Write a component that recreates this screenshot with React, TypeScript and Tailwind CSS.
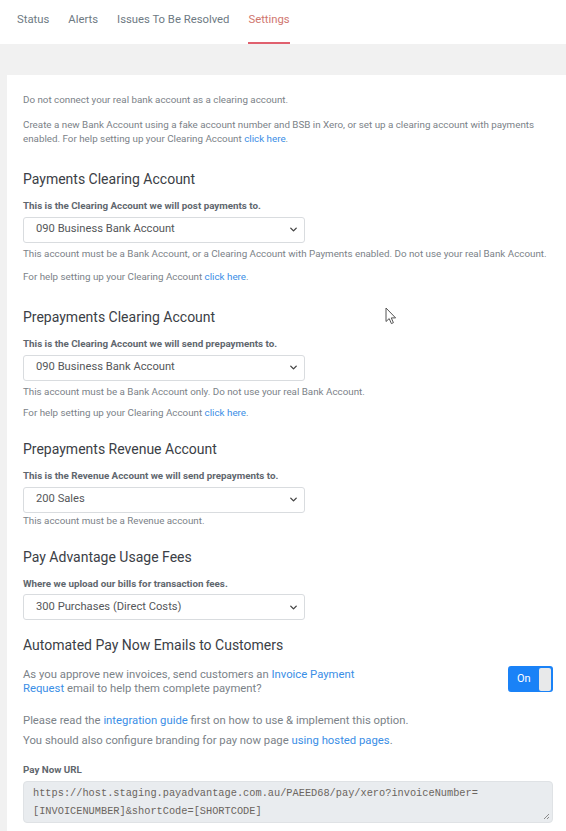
import { ChevronDown } from "lucide-react";

const tabs = ["Status", "Alerts", "Issues To Be Resolved", "Settings"];

function Select({ value, className = "" }: { value: string; className?: string }) {
  return (
    <div
      className={`flex h-[26px] w-[282px] items-center justify-between rounded-[3px] border border-[#d9dcdf] bg-white pl-[12px] pr-[5px] text-[11.2px] text-[#55575a] ${className}`}
    >
      <span>{value}</span>
      <ChevronDown size={11} strokeWidth={3} className="text-[#444]" />
    </div>
  );
}

function Heading({ children, className = "" }: { children: React.ReactNode; className?: string }) {
  return <h2 className={`text-[14px] leading-[20px] text-[#3b4046] ${className}`}>{children}</h2>;
}

function Label({ children, className = "" }: { children: React.ReactNode; className?: string }) {
  return (
    <div className={`text-[9.8px] font-bold leading-[13px] text-[#5f676e] ${className}`}>{children}</div>
  );
}

function Small({ children, className = "" }: { children: React.ReactNode; className?: string }) {
  return <p className={`text-[9.8px] leading-[14.5px] text-[#7b8288] ${className}`}>{children}</p>;
}

function Link({ children }: { children: React.ReactNode }) {
  return <a className="text-[#3a8ee6]">{children}</a>;
}

export default function App() {
  return (
    <div className="relative min-h-[831px] bg-[#f1f1f1] font-['Roboto',sans-serif]">
      <header className="flex h-[44px] gap-[19px] bg-white pl-[17px]">
        {tabs.map((t) => (
          <div
            key={t}
            className={`flex h-[44px] items-center border-b-2 pb-[2px] text-[11.3px] ${
              t === "Settings" ? "border-[#e0606e] text-[#d0766e]" : "border-transparent text-[#6e7a83]"
            }`}
          >
            {t}
          </div>
        ))}
      </header>

      <main className="pl-[7px] pt-[31px]">
        <section className="min-h-[756px] bg-white pl-[16px] pr-[13px] pt-[18px]">
          <Small>Do not connect your real bank account as a clearing account.</Small>
          <Small className="mt-[10px] pr-[8px]">
            Create a new Bank Account using a fake account number and BSB in Xero, or set up a clearing
            account with payments enabled. For help setting up your Clearing Account <Link>click here</Link>.
          </Small>

          <Heading className="mt-[22px]">Payments Clearing Account</Heading>
          <Label className="mt-[10px]">This is the Clearing Account we will post payments to.</Label>
          <Select value="090 Business Bank Account" className="mt-[5px]" />
          <Small className="mt-[4px] whitespace-nowrap">
            This account must be a Bank Account, or a Clearing Account with Payments enabled. Do not use your
            real Bank Account.
          </Small>
          <Small className="mt-[9px]">
            For help setting up your Clearing Account <Link>click here</Link>.
          </Small>

          <Heading className="mt-[22px]">Prepayments Clearing Account</Heading>
          <Label className="mt-[10px]">This is the Clearing Account we will send prepayments to.</Label>
          <Select value="090 Business Bank Account" className="mt-[5px]" />
          <Small className="mt-[4px]">This account must be a Bank Account only. Do not use your real Bank Account.</Small>
          <Small className="mt-[7px]">
            For help setting up your Clearing Account <Link>click here</Link>.
          </Small>

          <Heading className="mt-[18px]">Prepayments Revenue Account</Heading>
          <Label className="mt-[10px]">This is the Revenue Account we will send prepayments to.</Label>
          <Select value="200 Sales" className="mt-[5px]" />
          <Small className="mt-[1px]">This account must be a Revenue account.</Small>

          <Heading className="mt-[19px]">Pay Advantage Usage Fees</Heading>
          <Label className="mt-[10px]">Where we upload our bills for transaction fees.</Label>
          <Select value="300 Purchases (Direct Costs)" className="mt-[4px]" />

          <Heading className="mt-[15px]">Automated Pay Now Emails to Customers</Heading>
          <div className="mt-[11px] flex items-start justify-between">
            <p className="w-[345px] pt-[2px] text-[11.3px] leading-[14.3px] text-[#7b8288]">
              As you approve new invoices, send customers an <Link>Invoice Payment Request</Link> email to help
              them complete payment?
            </p>
            <div className="flex h-[26px] w-[45px] items-center justify-between rounded-[3px] bg-[#1a82f7] pl-[9px] pr-[2px]">
              <span className="text-[11px] text-white">On</span>
              <span className="h-[23px] w-[12px] rounded-[2px] bg-[#e8e9ea]" />
            </div>
          </div>
          <p className="mt-[17px] text-[11.3px] leading-[14.3px] text-[#7b8288]">
            Please read the <Link>integration guide</Link> first on how to use &amp; implement this option.
          </p>
          <p className="mt-[6px] text-[11.3px] leading-[14.3px] text-[#7b8288]">
            You should also configure branding for pay now page <Link>using hosted pages</Link>.
          </p>

          <Label className="mt-[15px]">Pay Now URL</Label>
          <div className="relative mt-[5px] h-[42px] rounded-[4px] border border-[#dfe2e5] bg-[#e9ecef] pl-[9px] pt-[3px] font-['Liberation_Mono',monospace] text-[10.3px] leading-[17.7px] text-[#6b6560]">
            https://host.staging.payadvantage.com.au/PAEED68/pay/xero?invoiceNumber=
            <br />
            [INVOICENUMBER]&amp;shortCode=[SHORTCODE]
            <svg className="absolute bottom-[2px] right-[2px]" width="7" height="7" viewBox="0 0 7 7">
              <path d="M6 1L1 6M6 4L4 6" stroke="#8a8a8a" strokeWidth="1" />
            </svg>
          </div>
        </section>
      </main>

      <svg className="absolute left-[385px] top-[307px]" width="12" height="18" viewBox="0 0 12 18">
        <path
          d="M1 1L1 14.5L4.2 11.6L6.4 16.6L8.4 15.7L6.3 10.9L10.6 10.9Z"
          fill="#ffffff"
          stroke="#555"
          strokeWidth="1"
          strokeLinejoin="round"
        />
      </svg>
    </div>
  );
}
